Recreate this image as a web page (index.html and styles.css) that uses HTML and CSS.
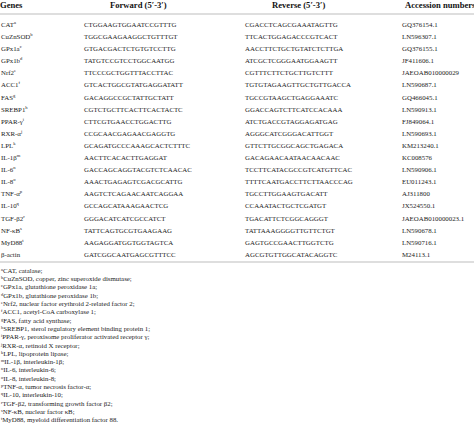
FILE: index.html
```html
<!DOCTYPE html>
<html lang="en">
<head>
<meta charset="utf-8">
<title>Primer sequences</title>
<link rel="stylesheet" href="styles.css">
</head>
<body>
<div class="page">
<table class="primers">
  <colgroup>
    <col class="c-gene"><col class="c-fwd"><col class="c-rev"><col class="c-acc">
  </colgroup>
  <thead>
    <tr>
      <th class="h-gene">Genes</th>
      <th class="h-fwd">Forward (5′-3′)</th>
      <th class="h-rev">Reverse (5′-3′)</th>
      <th class="h-acc">Accession numbers</th>
    </tr>
  </thead>
  <tbody>
    <tr class="first"><td>CAT<sup>a</sup></td><td>CTGGAAGTGGAATCCGTTTG</td><td>CGACCTCAGCGAAATAGTTG</td><td>GQ376154.1</td></tr>
    <tr><td>CuZnSOD<sup>b</sup></td><td>TGGCGAAGAAGGCTGTTTGT</td><td>TTCACTGGAGACCCGTCACT</td><td>LN596307.1</td></tr>
    <tr><td>GPx1a<sup>c</sup></td><td>GTGACGACTCTGTGTCCTTG</td><td>AACCTTCTGCTGTATCTCTTGA</td><td>GQ376155.1</td></tr>
    <tr><td>GPx1b<sup>d</sup></td><td>TATGTCCGTCCTGGCAATGG</td><td>ATCGCTCGGGAATGGAAGTT</td><td>JF411606.1</td></tr>
    <tr><td>Nrf2<sup>e</sup></td><td>TTCCCGCTGGTTTACCTTAC</td><td>CGTTTCTTCTGCTTGTCTTT</td><td>JAEOAB010000029</td></tr>
    <tr><td>ACC1<sup>f</sup></td><td>GTCACTGGCGTATGAGGATATT</td><td>TGTGTAGAAGTTGCTGTTGACCA</td><td>LN590687.1</td></tr>
    <tr><td>FAS<sup>g</sup></td><td>GACAGGCCGCTATTGCTATT</td><td>TGCCGTAAGCTGAGGAAATC</td><td>GQ466045.1</td></tr>
    <tr><td>SREBP1<sup>h</sup></td><td>CGTCTGCTTCACTTCACTACTC</td><td>GGACCAGTCTTCATCCACAAA</td><td>LN590913.1</td></tr>
    <tr><td>PPAR-γ<sup>i</sup></td><td>CTTCGTGAACCTGGACTTG</td><td>ATCTGACCGTAGGAGATGAG</td><td>FJ849064.1</td></tr>
    <tr><td>RXR-α<sup>j</sup></td><td>CCGCAACGAGAACGAGGTG</td><td>AGGGCATCGGGACATTGGT</td><td>LN590693.1</td></tr>
    <tr><td>LPL<sup>k</sup></td><td>GCAGATGCCCAAAGCACTCTTTC</td><td>GTTCTTGCGGCAGCTGAGACA</td><td>KM213240.1</td></tr>
    <tr><td>IL-1β<sup>m</sup></td><td>AACTTCACACTTGAGGAT</td><td>GACAGAACAATAACAACAAC</td><td>KC008576</td></tr>
    <tr><td>IL-6<sup>n</sup></td><td>GACCAGCAGGTACGTCTCAACAC</td><td>TCCTTCATACGCCGTCATGTTCAC</td><td>LN590906.1</td></tr>
    <tr><td>IL-8<sup>o</sup></td><td>AAACTGAGAGTCGACGCATTG</td><td>TTTTCAATGACCTTCTTAACCCAG</td><td>EU011243.1</td></tr>
    <tr><td>TNF-α<sup>p</sup></td><td>AAGTCTCAGAACAATCAGGAA</td><td>TGCCTTGGAAGTGACATT</td><td>AJ311800</td></tr>
    <tr><td>IL-10<sup>q</sup></td><td>GCCAGCATAAAGAACTCG</td><td>CCAAATACTGCTCGATGT</td><td>JX524550.1</td></tr>
    <tr><td>TGF-β2<sup>r</sup></td><td>GGGACATCATCGCCATCT</td><td>TGACATTCTCGGCAGGGT</td><td>JAEOAB010000023.1</td></tr>
    <tr><td>NF-κB<sup>s</sup></td><td>TATTCAGTGCGTGAAGAAG</td><td>TATTAAAGGGGTTGTTCTGT</td><td>LN590678.1</td></tr>
    <tr><td>MyD88<sup>t</sup></td><td>AAGAGGATGGTGGTAGTCA</td><td>GAGTGCCGAACTTGGTCTG</td><td>LN590716.1</td></tr>
    <tr class="last"><td>β-actin</td><td>GATCGGCAATGAGCGTTTCC</td><td>AGCGTGTTGGCATACAGGTC</td><td>M24113.1</td></tr>
  </tbody>
</table>
<ul class="notes">
  <li><sup>a</sup>CAT, catalase;</li>
  <li><sup>b</sup>CuZnSOD, copper, zinc superoxide dismutase;</li>
  <li><sup>c</sup>GPx1a, glutathione peroxidase 1a;</li>
  <li><sup>d</sup>GPx1b, glutathione peroxidase 1b;</li>
  <li><sup>e</sup>Nrf2, nuclear factor erythroid 2-related factor 2;</li>
  <li><sup>f</sup>ACC1, acetyl-CoA carboxylase 1;</li>
  <li><sup>g</sup>FAS, fatty acid synthase;</li>
  <li><sup>h</sup>SREBP1, sterol regulatory element binding protein 1;</li>
  <li><sup>i</sup>PPAR-γ, peroxisome proliferator activated receptor γ;</li>
  <li><sup>j</sup>RXR-α, retinoid X receptor;</li>
  <li><sup>k</sup>LPL, lipoprotein lipase;</li>
  <li><sup>m</sup>IL-1β, interleukin-1β;</li>
  <li><sup>n</sup>IL-6, interleukin-6;</li>
  <li><sup>o</sup>IL-8, interleukin-8;</li>
  <li><sup>p</sup>TNF-α, tumor necrosis factor-α;</li>
  <li><sup>q</sup>IL-10, interleukin-10;</li>
  <li><sup>r</sup>TGF-β2, transforming growth factor β2;</li>
  <li><sup>s</sup>NF-κB, nuclear factor κB;</li>
  <li><sup>t</sup>MyD88, myeloid differentiation factor 88.</li>
</ul>
</div>
</body>
</html>
```

FILE: styles.css
```css
html, body {
  margin: 0;
  padding: 0;
  background: #ffffff;
  overflow: hidden;
}

body {
  font-family: "Liberation Serif", "Times New Roman", serif;
  color: #1c1c1c;
}

.page {
  width: 474px;
  height: 428px;
  overflow: hidden;
}

.primers {
  border-collapse: collapse;
  table-layout: fixed;
  width: 530px;
}

.c-gene { width: 84px; }
.c-fwd { width: 161px; }
.c-rev { width: 157px; }
.c-acc { width: 128px; }

.primers th {
  font-size: 8.6px;
  font-weight: bold;
  color: #111;
  text-align: left;
  white-space: nowrap;
  line-height: 10px;
  padding: 0 0 3px 0;
  vertical-align: top;
  border-bottom: 2px solid #dedede;
}

.primers .h-gene { padding-left: 0; }
.primers .h-fwd { padding-left: 26px; }
.primers .h-rev { padding-left: 27px; }
.primers .h-acc { padding-left: 3px; }

.primers td {
  font-size: 6.85px;
  line-height: 12.1px;
  padding: 0;
  white-space: nowrap;
  vertical-align: middle;
}

.primers td:first-child {
  padding-left: 1px;
}

.primers .first td {
  padding-top: 4px;
}

.primers .last td {
  padding-bottom: 0;
  border-bottom: 2px solid #dedede;
}

sup {
  font-size: 4.6px;
  line-height: 0;
  vertical-align: 2.6px;
}

.notes {
  list-style: none;
  margin: 4px 0 0 0;
  padding: 0 0 0 1px;
  font-size: 6.85px;
  line-height: 8.3px;
  color: #1c1c1c;
}

.notes sup {
  font-size: 4.3px;
  vertical-align: 2.4px;
}
```
